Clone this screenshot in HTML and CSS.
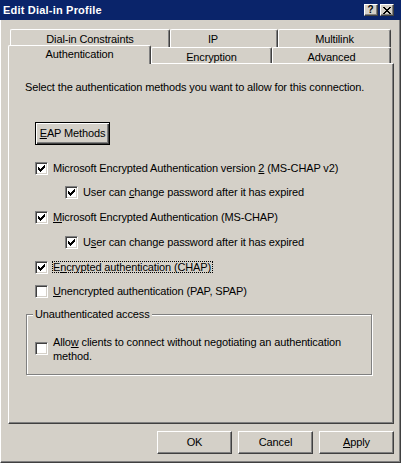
FILE: index.html
```html
<!DOCTYPE html>
<html>
<head>
<meta charset="utf-8">
<title>Edit Dial-in Profile</title>
<link rel="stylesheet" href="styles.css">
</head>
<body>
<div class="window">
  <div class="titlebar">
    <span class="title">Edit Dial-in Profile</span>
    <div class="caption-btns">
      <span class="cbtn help">?</span>
      <span class="cbtn close"><svg width="8" height="7" viewBox="0 0 8 7" shape-rendering="crispEdges"><path d="M0 0h2v1h-2z M6 0h2v1h-2z M1 1h2v1h-2z M5 1h2v1h-2z M2 2h4v1h-4z M3 3h2v1h-2z M2 4h4v1h-4z M1 5h2v1h-2z M5 5h2v1h-2z M0 6h2v1h-2z M6 6h2v1h-2z" fill="#000"/></svg></span>
    </div>
  </div>
  <div class="client">
    <div class="tabstrip">
      <div class="tabrow back">
        <div class="tab t-dial">Dial-in Constraints</div>
        <div class="tab t-ip">IP</div>
        <div class="tab t-multi">Multilink</div>
      </div>
      <div class="tabrow front">
        <div class="tab t-auth selected">Authentication</div>
        <div class="tab t-enc">Encryption</div>
        <div class="tab t-adv">Advanced</div>
      </div>
    </div>
    <div class="panel">
      <p class="intro">Select the authentication methods you want to allow for this connection.</p>
      <button class="btn eap"><u>E</u>AP Methods</button>
      <div class="options">
        <div class="row">
          <span class="cb"><svg width="11" height="11" viewBox="0 0 11 11" shape-rendering="crispEdges"><path d="M8 2h1v1h-1z M7 3h2v1h-2z M2 4h1v1h-1z M6 4h3v1h-3z M2 5h2v1h-2z M5 5h3v1h-3z M2 6h5v1h-5z M3 7h3v1h-3z M4 8h1v1h-1z" fill="#000"/></svg></span>
          <span class="label">Microsoft Encrypted Authentication version <u>2</u> (MS-CHAP v2)</span>
        </div>
        <div class="row sub">
          <span class="cb"><svg width="11" height="11" viewBox="0 0 11 11" shape-rendering="crispEdges"><path d="M8 2h1v1h-1z M7 3h2v1h-2z M2 4h1v1h-1z M6 4h3v1h-3z M2 5h2v1h-2z M5 5h3v1h-3z M2 6h5v1h-5z M3 7h3v1h-3z M4 8h1v1h-1z" fill="#000"/></svg></span>
          <span class="label">User can <u>c</u>hange password after it has expired</span>
        </div>
        <div class="row">
          <span class="cb"><svg width="11" height="11" viewBox="0 0 11 11" shape-rendering="crispEdges"><path d="M8 2h1v1h-1z M7 3h2v1h-2z M2 4h1v1h-1z M6 4h3v1h-3z M2 5h2v1h-2z M5 5h3v1h-3z M2 6h5v1h-5z M3 7h3v1h-3z M4 8h1v1h-1z" fill="#000"/></svg></span>
          <span class="label"><u>M</u>icrosoft Encrypted Authentication (MS-CHAP)</span>
        </div>
        <div class="row sub">
          <span class="cb"><svg width="11" height="11" viewBox="0 0 11 11" shape-rendering="crispEdges"><path d="M8 2h1v1h-1z M7 3h2v1h-2z M2 4h1v1h-1z M6 4h3v1h-3z M2 5h2v1h-2z M5 5h3v1h-3z M2 6h5v1h-5z M3 7h3v1h-3z M4 8h1v1h-1z" fill="#000"/></svg></span>
          <span class="label">U<u>s</u>er can change password after it has expired</span>
        </div>
        <div class="row">
          <span class="cb"><svg width="11" height="11" viewBox="0 0 11 11" shape-rendering="crispEdges"><path d="M8 2h1v1h-1z M7 3h2v1h-2z M2 4h1v1h-1z M6 4h3v1h-3z M2 5h2v1h-2z M5 5h3v1h-3z M2 6h5v1h-5z M3 7h3v1h-3z M4 8h1v1h-1z" fill="#000"/></svg></span>
          <span class="label focus">E<u>n</u>crypted authentication (CHAP)</span>
        </div>
        <div class="row">
          <span class="cb"></span>
          <span class="label"><u>U</u>nencrypted authentication (PAP, SPAP)</span>
        </div>
      </div>
      <div class="group">
        <span class="legend">Unauthenticated access</span>
        <div class="grouprow">
          <span class="cb"></span>
          <div class="lines">
            <span class="line">Allo<u>w</u> clients to connect without negotiating an authentication</span>
            <span class="line">method.</span>
          </div>
        </div>
      </div>
    </div>
    <div class="dlg-buttons">
      <button class="btn">OK</button>
      <button class="btn">Cancel</button>
      <button class="btn"><u>A</u>pply</button>
    </div>
  </div>
</div>
</body>
</html>
```
FILE: styles.css
```css
* { box-sizing: border-box; }
html, body { margin: 0; padding: 0; }
body {
  width: 401px;
  height: 463px;
  overflow: hidden;
  background: #d4d0c8;
  font-family: "Liberation Sans", Arial, sans-serif;
  font-size: 11px;
  letter-spacing: -0.13px;
  color: #000;
}
.window {
  width: 401px;
  height: 463px;
  display: flex;
  flex-direction: column;
}
.titlebar {
  flex: none;
  height: 20px;
  background: #0a246a;
  display: flex;
  align-items: center;
  justify-content: space-between;
  padding: 0 7px 0 3px;
}
.title {
  color: #fff;
  font-weight: bold;
  font-size: 11px;
  letter-spacing: 0.2px;
  line-height: 13px;
  white-space: nowrap;
}
.caption-btns { display: flex; gap: 2px; }
.cbtn {
  width: 14px;
  height: 12px;
  background: #d4d0c8;
  border: 1px solid;
  border-color: #fff #404040 #404040 #fff;
  box-shadow: inset -1px -1px #808080;
  display: flex;
  align-items: center;
  justify-content: center;
}
.help {
  font-weight: bold;
  font-size: 10px;
  line-height: 10px;
  padding-right: 1px;
}
.close svg { display: block; margin-right: 1px; }
.client {
  flex: 1;
  border-left: 1px solid #fff;
  border-right: 1px solid #404040;
  border-bottom: 1px solid #404040;
  box-shadow: inset -1px -1px #808080;
  padding: 9px 0 0 7px;
}
.tabstrip {
  width: 386px;
  height: 34px;
  display: flex;
  flex-direction: column;
}
.tabrow { display: flex; padding-left: 2px; }
.back { height: 18px; }
.front { height: 16px; }
.tab {
  background: #d4d0c8;
  border: 1px solid #fff;
  border-right-color: #404040;
  border-bottom: none;
  box-shadow: inset -1px 0 #808080;
  border-radius: 2px 2px 0 0;
  text-align: center;
  white-space: nowrap;
  padding-top: 3px;
}
.back .tab { height: 18px; line-height: 13px; }
.front .tab { height: 16px; line-height: 12px; }
.t-dial { width: 160px; }
.t-ip { width: 108px; padding-right: 22px; }
.t-multi { width: 113px; }
.t-auth { width: 143px; margin-left: -2px; }
.t-enc { width: 121px; }
.t-adv { width: 119px; }
.front .tab.selected {
  position: relative;
  z-index: 1;
  margin-top: -2px;
  height: 19px;
  padding-top: 2px;
  line-height: 13px;
}
.panel {
  width: 386px;
  height: 361px;
  border: 1px solid;
  border-color: #fff #404040 #404040 #fff;
  box-shadow: inset -1px -1px #808080;
  padding: 17px 0 0 16px;
}
.intro {
  margin: 0;
  line-height: 13px;
  white-space: nowrap;
}
.btn {
  font: inherit;
  letter-spacing: inherit;
  color: #000;
  width: 75px;
  height: 23px;
  padding: 0;
  background: #d4d0c8;
  border: 1px solid;
  border-color: #fff #404040 #404040 #fff;
  box-shadow: inset -1px -1px #808080;
  line-height: 13px;
  text-align: center;
}
.eap {
  display: block;
  margin: 28px 0 0 10px;
  border-color: #000;
  box-shadow: inset 1px 1px #fff, inset -1px -1px #404040, inset -2px -2px #808080;
}
.options {
  margin: 16.5px 0 0 10px;
  display: flex;
  flex-direction: column;
  gap: 11.8px;
}
.row {
  display: flex;
  align-items: center;
  height: 13px;
  line-height: 13px;
  white-space: nowrap;
}
.row.sub { margin-left: 30px; }
.cb {
  flex: none;
  width: 13px;
  height: 13px;
  margin-right: 5px;
  background: #fff;
  border: 1px solid;
  border-color: #808080 #fff #fff #808080;
  box-shadow: inset 1px 1px #404040, inset -1px -1px #d4d0c8;
}
.cb svg { display: block; }
.label.focus {
  border: 1px dotted #000;
  margin-left: -1px;
  padding: 0 1px 0 0;
  line-height: 10px;
  height: 12px;
}
.group {
  position: relative;
  margin: 15.5px 0 0 1px;
  width: 346px;
  height: 61px;
  border: 1px solid #808080;
  box-shadow: 1px 1px 0 #fff, inset 1px 1px 0 #fff;
  padding: 20px 0 0 8px;
}
.legend {
  position: absolute;
  top: -7px;
  left: 6px;
  padding: 0 2px;
  background: #d4d0c8;
  line-height: 13px;
  white-space: nowrap;
}
.grouprow {
  display: flex;
  align-items: center;
}
.lines {
  display: flex;
  flex-direction: column;
  line-height: 14px;
  white-space: nowrap;
}
.dlg-buttons {
  width: 386px;
  display: flex;
  justify-content: flex-end;
  gap: 6px;
  margin-top: 7px;
}
```
